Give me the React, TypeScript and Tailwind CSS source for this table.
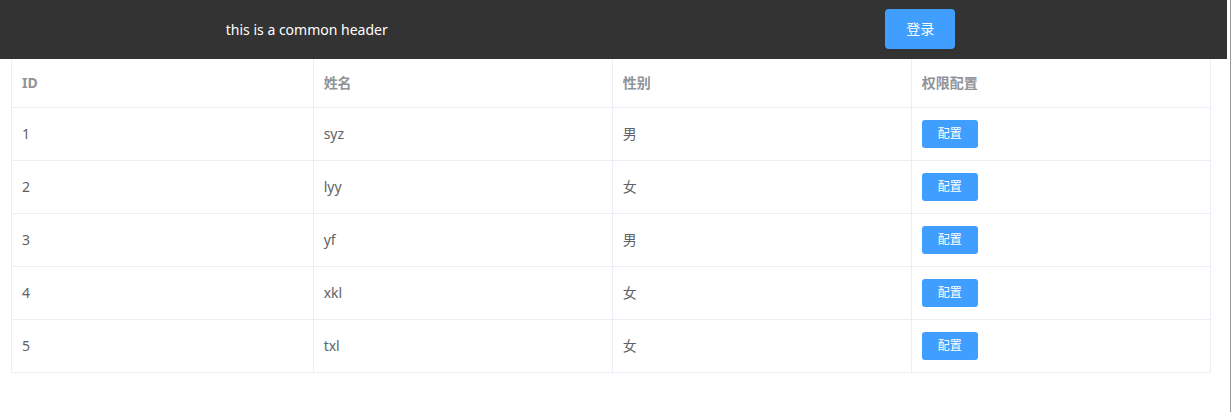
import React from "react";

type User = { id: number; name: string; sex: string };

const users: User[] = [
  { id: 1, name: "syz", sex: "男" },
  { id: 2, name: "lyy", sex: "女" },
  { id: 3, name: "yf", sex: "男" },
  { id: 4, name: "xkl", sex: "女" },
  { id: 5, name: "txl", sex: "女" },
];

const font = {
  fontFamily:
    '"Noto Sans", "Noto Sans CJK SC", "Helvetica Neue", Arial, sans-serif',
};

export default function App() {
  return (
    <div className="flex min-h-screen h-[412px] bg-white" style={font}>
      <div className="w-[1227px]">
        {/* Header */}
        <header className="h-[59px] bg-[#333333] flex items-center">
          <div className="flex-1 flex justify-center">
            <span className="text-white text-sm">this is a common header</span>
          </div>
          <div className="flex-1 flex justify-center mb-[2px]">
            <button className="h-10 w-[70px] rounded bg-[#409eff] text-white text-sm">
              登录
            </button>
          </div>
        </header>

        {/* Table */}
        <div className="ml-[11px] w-[1200px] border-l border-b border-[#ebeef5]">
          <table className="w-full table-fixed border-collapse text-sm">
            <colgroup>
              <col className="w-[301px]" />
              <col className="w-[299px]" />
              <col className="w-[299px]" />
              <col className="w-[299px]" />
            </colgroup>
            <thead>
              <tr className="h-12">
                {["ID", "姓名", "性别", "权限配置"].map((h) => (
                  <th
                    key={h}
                    className="border-r border-b border-[#ebeef5] px-[10px] text-left font-bold text-[#909399]"
                  >
                    {h}
                  </th>
                ))}
              </tr>
            </thead>
            <tbody>
              {users.map((u, i) => (
                <tr key={u.id} className="h-[53px] text-[#606266]">
                  <td className={`border-r border-[#ebeef5] px-[10px] ${i < users.length - 1 ? "border-b" : ""}`}>
                    {u.id}
                  </td>
                  <td className={`border-r border-[#ebeef5] px-[10px] ${i < users.length - 1 ? "border-b" : ""}`}>
                    {u.name}
                  </td>
                  <td className={`border-r border-[#ebeef5] px-[10px] ${i < users.length - 1 ? "border-b" : ""}`}>
                    {u.sex}
                  </td>
                  <td className={`border-r border-[#ebeef5] px-[10px] ${i < users.length - 1 ? "border-b" : ""}`}>
                    <button className="h-7 w-14 rounded-[3px] bg-[#409eff] text-white text-xs">
                      配置
                    </button>
                  </td>
                </tr>
              ))}
            </tbody>
          </table>
        </div>
      </div>
      <div className="w-[3px]" />
      <div className="w-px bg-[#9a9a9a]" />
    </div>
  );
}
